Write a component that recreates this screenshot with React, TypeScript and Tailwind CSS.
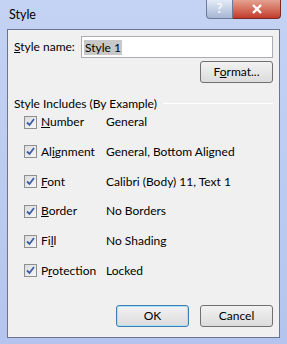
import React from 'react';

const rows = [
  { pre: '', ul: 'N', post: 'umber', value: 'General' },
  { pre: 'Al', ul: 'i', post: 'gnment', value: 'General, Bottom Aligned' },
  { pre: '', ul: 'F', post: 'ont', value: 'Calibri (Body) 11, Text 1' },
  { pre: '', ul: 'B', post: 'order', value: 'No Borders' },
  { pre: 'Fi', ul: 'l', post: 'l', value: 'No Shading' },
  { pre: 'P', ul: 'r', post: 'otection', value: 'Locked' },
];

function Check() {
  return (
    <div className="w-[13px] h-[13px] border border-[#8e8f8f] bg-gradient-to-br from-[#dcdcdc] to-[#f7f7f7] flex items-center justify-center shrink-0">
      <svg width="9" height="9" viewBox="0 0 9 9">
        <path d="M1 4.5 L3.5 7 L8 1" fill="none" stroke="#3b5ca8" strokeWidth="1.8" />
      </svg>
    </div>
  );
}

function Btn({ children, focus }: { children: React.ReactNode; focus?: boolean }) {
  return (
    <div
      className={`w-[73px] h-[22px] rounded-[3px] border flex items-center justify-center bg-gradient-to-b from-[#f2f2f2] to-[#dcdcdc] ${
        focus ? 'border-[#3c7fb1] shadow-[inset_0_0_0_1px_#a8e0f8]' : 'border-[#707070]'
      }`}
    >
      {children}
    </div>
  );
}

export default function App() {
  return (
    <div
      className="w-[287px] h-[344px] bg-gradient-to-b from-[#c4d3f3] to-[#b4c4ee] flex flex-col text-[12px] text-black overflow-hidden"
      style={{ fontFamily: 'Lato, "Open Sans", sans-serif' }}
    >
      {/* Title bar */}
      <div className="h-[29px] flex items-start relative">
        <span className="pl-[9px] pt-[6px] text-[12.5px]">Style</span>
        <div className="absolute right-[6px] top-0 flex">
          <div className="w-[27px] h-[19px] border border-[#6d7a98] border-t-0 rounded-bl-[4px] bg-gradient-to-b from-[#e4ebf7] to-[#a7b6d3] flex items-center justify-center text-[#f8f8f8] font-bold text-[13px]">
            ?
          </div>
          <div className="w-[48px] h-[19px] border border-[#7a2a22] border-t-0 border-l-0 rounded-br-[4px] bg-gradient-to-b from-[#e4a191] to-[#c1392b] flex items-center justify-center">
            <svg width="12" height="10" viewBox="0 0 12 10">
              <path d="M2 1 L10 9 M10 1 L2 9" stroke="#fff" strokeWidth="2.4" />
            </svg>
          </div>
        </div>
      </div>

      {/* Client area */}
      <div className="mx-[7px] flex-1 mb-[6px] border border-[#6a7591] bg-[#f0f0f0] flex flex-col px-[6px]">
        <div className="flex items-center mt-[6px] h-[22px]">
          <span className="w-[67px]">
            <span className="underline">S</span>tyle name:
          </span>
          <div className="flex-1 h-[22px] border border-[#abadb3] bg-white flex items-center pl-[2px]">
            <span className="bg-[#c8c8c8] px-[1px] leading-[15px]">Style 1</span>
          </div>
        </div>
        <div className="flex justify-end mt-[3px]">
          <Btn>
            <span>
              F<span className="underline">o</span>rmat...
            </span>
          </Btn>
        </div>
        <div className="flex items-center mt-[12px] gap-[6px] h-[17px]">
          <span>Style Includes (By Example)</span>
          <div className="flex-1 h-[1px] bg-[#dcdcdc] border-b border-white" />
        </div>
        <div className="flex flex-col mt-[1px] gap-[11.8px]">
          {rows.map((r) => (
            <div key={r.value} className="flex items-center h-[18px] pl-[10px]">
              <Check />
              <span className="w-[69px] pl-[4px]">
                {r.pre}
                <span className="underline">{r.ul}</span>
                {r.post}
              </span>
              <span>{r.value}</span>
            </div>
          ))}
        </div>
        <div className="flex-1" />
        <div className="flex justify-end gap-[11px] mb-[10px]">
          <Btn focus>OK</Btn>
          <Btn>Cancel</Btn>
        </div>
      </div>
    </div>
  );
}
